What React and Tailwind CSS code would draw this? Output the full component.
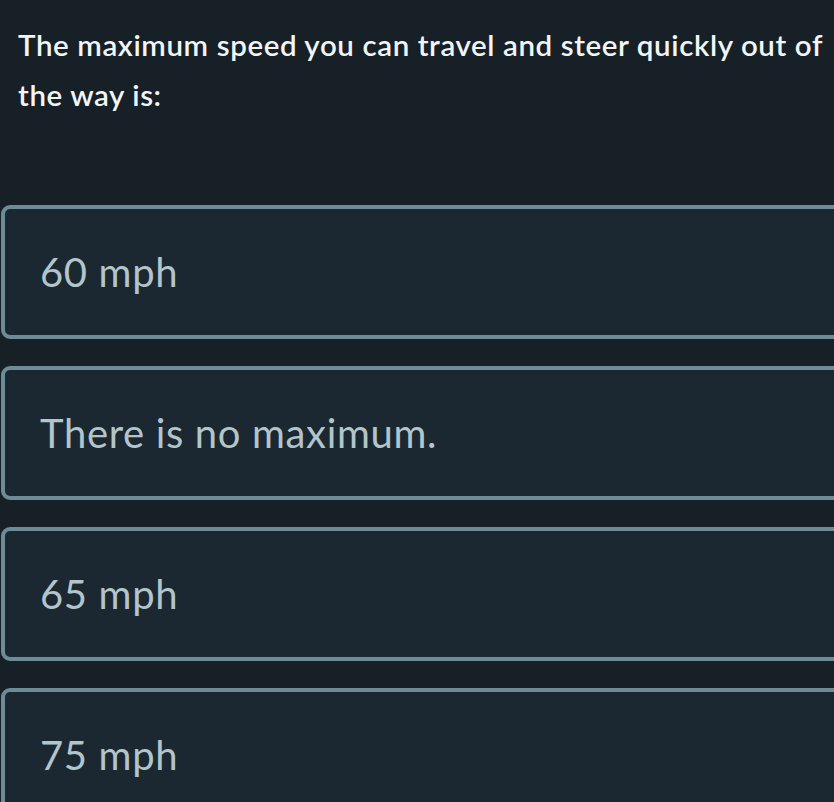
export default function App() {
  const options = ["60 mph", "There is no maximum.", "65 mph", "75 mph"];

  return (
    <div className="min-h-screen overflow-hidden bg-[#172027] font-['Lato','Open_Sans',sans-serif]">
      <h1 className="pl-[18px] pr-1 pt-[20px] text-[29.5px] font-semibold leading-[50px] tracking-[0.6px] text-[#f2f5f6]">
        The maximum speed you can travel and steer quickly out of the way is:
      </h1>
      <div className="mt-[85px] flex flex-col gap-[27px] pl-px">
        {options.map((option) => (
          <div
            key={option}
            className="-mr-6 flex h-[134px] items-center rounded-[9px] border-4 border-[#6c8c96] bg-[#1c2831] pl-[35px]"
          >
            <span className="text-[40px] tracking-[0.65px] text-[#b2c5cb]">{option}</span>
          </div>
        ))}
      </div>
    </div>
  );
}
